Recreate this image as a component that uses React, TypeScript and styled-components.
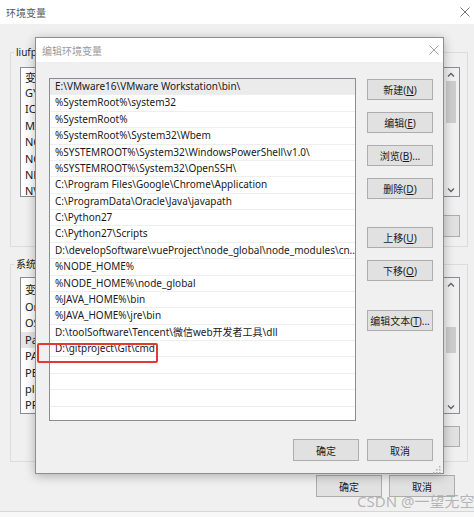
import React from "react";
import styled, { createGlobalStyle } from "styled-components";

const GlobalStyle = createGlobalStyle`
  html, body { margin: 0; padding: 0; background: #f8f8f8; }
  body {
    font-family: "Noto Sans", "Noto Sans CJK SC", sans-serif;
    font-size: 10px;
    color: #1a1a1a;
  }
  #root { width: 474px; height: 517px; overflow: hidden; }
`;

const Window = styled.div`
  position: relative;
  width: 474px;
  height: 512px;
  box-sizing: border-box;
  background: #f0f0f0;
  border-bottom: 1px solid #d6d6d6;
  display: flex;
  flex-direction: column;
`;

const TitleBar = styled.div<{ $inactive?: boolean }>`
  flex: none;
  height: 24px;
  background: #ffffff;
  display: flex;
  align-items: center;
  justify-content: space-between;
  padding: 0 4px 0 6px;
  font-size: 10px;
  color: ${(p) => (p.$inactive ? "#9a9a9a" : "#5a5a5a")};
`;

const CloseIcon = ({ color }: { color: string }) => (
  <svg width="10" height="10" viewBox="0 0 10 10">
    <path d="M0.5 0.5 L9.5 9.5 M9.5 0.5 L0.5 9.5" stroke={color} strokeWidth="1" fill="none" />
  </svg>
);

const GroupBox = styled.fieldset<{ $top: number; $padTop: number; $padBottom: number }>`
  margin: ${(p) => p.$top}px 6px 0 10px;
  padding: ${(p) => p.$padTop}px 7px ${(p) => p.$padBottom}px 9px;
  border: 1px solid #dcdcdc;
  min-inline-size: 0;
  display: flex;
  flex-direction: column;
`;

const Legend = styled.legend`
  margin-left: -6px;
  padding: 0 2px;
  font-size: 10px;
  line-height: 16px;
  color: #1a1a1a;
`;

const OuterList = styled.div<{ $h: number }>`
  display: flex;
  height: ${(p) => p.$h}px;
  box-sizing: border-box;
  border: 1px solid #8a8d94;
  background: #ffffff;
`;

const OuterListBody = styled.div`
  flex: 1;
  overflow: hidden;
  font-size: 11px;
`;

const OuterHeader = styled.div<{ $h: number }>`
  height: ${(p) => p.$h}px;
  display: flex;
  align-items: center;
  padding-left: 4px;
  gap: 120px;
`;

const OuterRow = styled.div<{ $selected?: boolean }>`
  height: 16.4px;
  line-height: 16.4px;
  padding-left: 4px;
  white-space: nowrap;
  background: ${(p) => (p.$selected ? "#e6e6e6" : "transparent")};
`;

const Scrollbar = styled.div`
  width: 16px;
  flex: none;
  background: #f0f0f0;
  display: flex;
  flex-direction: column;
  align-items: center;
`;

const ArrowBox = styled.div`
  height: 13px;
  flex: none;
  display: flex;
  align-items: center;
  justify-content: center;
`;

const Track = styled.div`
  flex: 1;
  width: 100%;
  display: flex;
  flex-direction: column;
  align-items: center;
`;

const Thumb = styled.div`
  width: 10px;
  background: #cdcdcd;
`;

const Arrow = ({ up }: { up?: boolean }) => (
  <ArrowBox>
    <svg width="8" height="6" viewBox="0 0 8 6">
      <path
        d={up ? "M1 4.5 L4 1.5 L7 4.5" : "M1 1.5 L4 4.5 L7 1.5"}
        stroke="#606060"
        strokeWidth="1.3"
        fill="none"
      />
    </svg>
  </ArrowBox>
);

const ButtonRow = styled.div<{ $top: number; $gap: number; $padRight?: number }>`
  display: flex;
  justify-content: flex-end;
  gap: ${(p) => p.$gap}px;
  margin-top: ${(p) => p.$top}px;
  padding-right: ${(p) => p.$padRight ?? 0}px;
`;

const Button = styled.div<{ $h?: number; $mt?: number }>`
  width: 66px;
  height: ${(p) => p.$h ?? 21}px;
  margin-top: ${(p) => p.$mt ?? 0}px;
  box-sizing: border-box;
  background: #e1e1e1;
  border: 1px solid #adadad;
  display: flex;
  align-items: center;
  justify-content: center;
  font-size: 10px;
  color: #1a1a1a;
  white-space: nowrap;
  flex: none;
`;

const Dialog = styled.div`
  position: absolute;
  left: 35px;
  top: 37px;
  width: 409px;
  height: 437px;
  box-sizing: border-box;
  border: 1px solid #8e8e8e;
  background: #f0f0f0;
  box-shadow: 0 2px 10px rgba(0, 0, 0, 0.28);
  display: flex;
  flex-direction: column;
`;

const DialogBody = styled.div`
  display: flex;
  gap: 11px;
  padding: 16px 10px 0 13px;
`;

const PathList = styled.div`
  flex: 1;
  height: 343px;
  box-sizing: border-box;
  border: 1px solid #8a8d94;
  background: #ffffff;
  overflow: hidden;
`;

const PathRow = styled.div<{ $selected?: boolean }>`
  height: 16.375px;
  box-sizing: border-box;
  line-height: 15.4px;
  padding-left: 5px;
  white-space: nowrap;
  overflow: hidden;
  border-bottom: 1px solid #eeeeee;
  background: ${(p) => (p.$selected ? "#ebebeb" : "#ffffff")};
  color: #1a1a1a;
  font-size: 10px;
`;

const ButtonColumn = styled.div`
  display: flex;
  flex-direction: column;
  padding-top: 1px;
`;

const Highlight = styled.div`
  position: absolute;
  left: 1px;
  top: 305px;
  width: 121px;
  height: 20px;
  box-sizing: border-box;
  border: 2px solid #e23a32;
  border-radius: 2px;
`;

const Grip = styled.div`
  position: absolute;
  right: 2px;
  bottom: 2px;
  width: 8px;
  height: 8px;
`;

const Watermark = styled.div`
  position: absolute;
  left: 357px;
  top: 491px;
  font-family: "Noto Sans", "Noto Sans CJK SC", sans-serif;
  font-size: 15px;
  line-height: 20px;
  color: rgba(170, 170, 170, 0.85);
  white-space: nowrap;
`;

const paths = [
  "E:\\VMware16\\VMware Workstation\\bin\\",
  "%SystemRoot%\\system32",
  "%SystemRoot%",
  "%SystemRoot%\\System32\\Wbem",
  "%SYSTEMROOT%\\System32\\WindowsPowerShell\\v1.0\\",
  "%SYSTEMROOT%\\System32\\OpenSSH\\",
  "C:\\Program Files\\Google\\Chrome\\Application",
  "C:\\ProgramData\\Oracle\\Java\\javapath",
  "C:\\Python27",
  "C:\\Python27\\Scripts",
  "D:\\developSoftware\\vueProject\\node_global\\node_modules\\cn...",
  "%NODE_HOME%",
  "%NODE_HOME%\\node_global",
  "%JAVA_HOME%\\bin",
  "%JAVA_HOME%\\jre\\bin",
  "D:\\toolSoftware\\Tencent\\微信web开发者工具\\dll",
  "D:\\gitproject\\Git\\cmd",
  "",
  "",
  "",
  "",
];

const userVars = ["GYP_MSVS_VERSION", "IC_HOME", "MAVEN_HOME", "NODE_HOME", "NODE_PATH", "NPM_HOME", "NVM_HOME"];
const sysVars = ["OnlineServices", "OS", "Path", "PATHEXT", "PERL5LIB", "platformcode", "PROCESSOR_ARCHITECTURE"];

const Key = ({ k }: { k: string }) => (
  <>
    (<u>{k}</u>)
  </>
);

const ScrollBarView = ({ top, height }: { top: number; height: number }) => (
  <Scrollbar>
    <Arrow up />
    <Track>
      <Thumb style={{ marginTop: top, height }} />
    </Track>
    <Arrow />
  </Scrollbar>
);

export default function App() {
  return (
    <>
      <GlobalStyle />
      <Window>
        <TitleBar>
          <span>环境变量</span>
          <CloseIcon color="#707070" />
        </TitleBar>

        <GroupBox $top={20} $padTop={7} $padBottom={9}>
          <Legend>liufp 的用户变量(U)</Legend>
          <OuterList $h={130}>
            <OuterListBody>
              <OuterHeader $h={17}>
                <span>变量</span>
                <span>值</span>
              </OuterHeader>
              {userVars.map((v) => (
                <OuterRow key={v}>{v}</OuterRow>
              ))}
            </OuterListBody>
            <ScrollBarView top={0} height={42} />
          </OuterList>
          <ButtonRow $top={18} $gap={8}>
            <Button $h={22}>新建(N)...</Button>
            <Button $h={22}>编辑(E)...</Button>
            <Button $h={22}>删除(D)</Button>
          </ButtonRow>
        </GroupBox>

        <GroupBox $top={9} $padTop={5} $padBottom={14}>
          <Legend>系统变量(S)</Legend>
          <OuterList $h={137}>
            <OuterListBody>
              <OuterHeader $h={21}>
                <span>变量</span>
                <span>值</span>
              </OuterHeader>
              {sysVars.map((v) => (
                <OuterRow key={v} $selected={v === "Path"}>
                  {v}
                </OuterRow>
              ))}
            </OuterListBody>
            <ScrollBarView top={36} height={26} />
          </OuterList>
          <ButtonRow $top={12} $gap={8}>
            <Button>新建(W)...</Button>
            <Button>编辑(I)...</Button>
            <Button>删除(L)</Button>
          </ButtonRow>
        </GroupBox>

        <ButtonRow $top={13} $gap={7} $padRight={19}>
          <Button $h={22}>确定</Button>
          <Button $h={22}>取消</Button>
        </ButtonRow>

        <Dialog>
          <TitleBar $inactive>
            <span>编辑环境变量</span>
            <CloseIcon color="#a0a0a0" />
          </TitleBar>
          <DialogBody>
            <PathList>
              {paths.map((p, i) => (
                <PathRow key={i} $selected={i === 0}>
                  {p}
                </PathRow>
              ))}
            </PathList>
            <ButtonColumn>
              <Button>
                新建<Key k="N" />
              </Button>
              <Button $mt={12}>
                编辑<Key k="E" />
              </Button>
              <Button $mt={12}>
                浏览<Key k="B" />...
              </Button>
              <Button $mt={12}>
                删除<Key k="D" />
              </Button>
              <Button $mt={28}>
                上移<Key k="U" />
              </Button>
              <Button $mt={12}>
                下移<Key k="O" />
              </Button>
              <Button $mt={29}>
                编辑文本<Key k="T" />...
              </Button>
            </ButtonColumn>
          </DialogBody>
          <ButtonRow $top={18} $gap={8} $padRight={10}>
            <Button $h={22}>确定</Button>
            <Button $h={22}>取消</Button>
          </ButtonRow>
          <Highlight />
          <Grip>
            <svg width="8" height="8" viewBox="0 0 8 8">
              <rect x="6" y="0" width="1.5" height="1.5" fill="#b0b0b0" />
              <rect x="6" y="3" width="1.5" height="1.5" fill="#b0b0b0" />
              <rect x="3" y="3" width="1.5" height="1.5" fill="#b0b0b0" />
              <rect x="6" y="6" width="1.5" height="1.5" fill="#b0b0b0" />
              <rect x="3" y="6" width="1.5" height="1.5" fill="#b0b0b0" />
              <rect x="0" y="6" width="1.5" height="1.5" fill="#b0b0b0" />
            </svg>
          </Grip>
        </Dialog>

        <Watermark>CSDN @一望无空</Watermark>
      </Window>
    </>
  );
}
